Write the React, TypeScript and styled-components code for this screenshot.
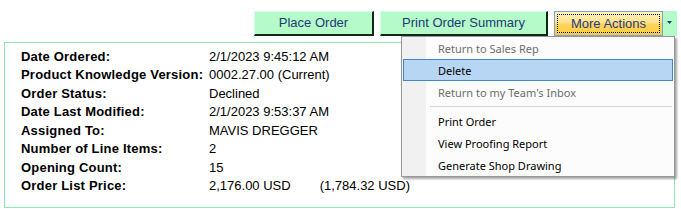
import React from "react";
import styled, { createGlobalStyle, css } from "styled-components";

const Global = createGlobalStyle`
  html, body { margin: 0; padding: 0; background: #ffffff; }
  body { font-family: "Liberation Sans", Arial, sans-serif; }
`;

const Page = styled.div`
  position: relative;
  width: 681px;
  height: 209px;
  overflow: hidden;
  background: #fff;
`;

const Toolbar = styled.div`
  display: flex;
  justify-content: flex-end;
  align-items: flex-start;
  gap: 6px;
  padding: 11px 4px 0 0;
  height: 25px;
`;

const GreenButton = styled.button`
  box-sizing: border-box;
  height: 25px;
  width: ${(p: { $w: number }) => p.$w}px;
  padding: 0 0 1px 0;
  background: #b4fbc9;
  border: none;
  border-top: 1px solid #d8fde3;
  border-left: 1px solid #d8fde3;
  border-right: 2px solid #0f2a14;
  border-bottom: 2px solid #0f2a14;
  font-family: "Liberation Sans", Arial, sans-serif;
  font-size: 13px;
  color: #1f3a73;
  cursor: pointer;
`;

const SplitGroup = styled.div`
  display: flex;
  height: 25px;
`;

const MoreButton = styled.button`
  box-sizing: border-box;
  width: 109px;
  height: 25px;
  padding: 0;
  border: 1px solid #7da2ce;
  background: linear-gradient(#fff3c2 0%, #ffe38a 45%, #ffd45c 55%, #ffcb45 100%);
  font-family: "Liberation Sans", Arial, sans-serif;
  font-size: 13px;
  color: #1f3a80;
  position: relative;
  cursor: pointer;
  &::after {
    content: "";
    position: absolute;
    inset: 2px;
    border: 1px dotted #000;
  }
`;

const ArrowPart = styled.div`
  width: 14px;
  height: 25px;
  background: #b4fbc9;
  display: flex;
  align-items: center;
  justify-content: center;
  padding-bottom: 3px;
  box-sizing: border-box;
`;

const Panel = styled.div`
  box-sizing: border-box;
  margin: 6px 6px 0 4px;
  height: 166px;
  border: 1px solid #8ee7b1;
  padding: 4px 0 0 16px;
`;

const Grid = styled.div`
  display: grid;
  grid-template-columns: 188px auto;
  grid-auto-rows: 18.5px;
  align-items: center;
  font-size: 13px;
  color: #000;
`;

const Label = styled.div`
  font-weight: bold;
  white-space: nowrap;
  letter-spacing: 0.2px;
`;

const Value = styled.div`
  white-space: nowrap;
  display: flex;
`;

const Secondary = styled.span`
  margin-left: 29px;
`;

const Menu = styled.div`
  position: absolute;
  left: 401px;
  top: 36px;
  width: 274px;
  height: 141px;
  box-sizing: border-box;
  border: 1px solid #979797;
  background: linear-gradient(to right, #f1f1f1 0, #f1f1f1 24px, #fcfcfc 24px);
  box-shadow: 2px 2px 2px rgba(0, 0, 0, 0.35);
  padding: 0 1px;
  font-family: "Noto Sans", "Open Sans", sans-serif;
  font-size: 11px;
`;

const Item = styled.div<{ $disabled?: boolean; $active?: boolean }>`
  box-sizing: border-box;
  height: 22px;
  display: flex;
  align-items: center;
  padding-left: 34px;
  border: 1px solid transparent;
  color: ${(p) => (p.$disabled ? "#6d6d6d" : "#000")};
  ${(p) =>
    p.$active &&
    css`
      background: #b7d6f3;
      border-color: #3f88cf;
    `}
`;

const Separator = styled.div`
  height: 1px;
  margin: 3px 1px 3px 27px;
  background: #d7d7d7;
`;

const rows: [string, React.ReactNode][] = [
  ["Date Ordered:", "2/1/2023 9:45:12 AM"],
  ["Product Knowledge Version:", "0002.27.00 (Current)"],
  ["Order Status:", "Declined"],
  ["Date Last Modified:", "2/1/2023 9:53:37 AM"],
  ["Assigned To:", "MAVIS DREGGER"],
  ["Number of Line Items:", "2"],
  ["Opening Count:", "15"],
  [
    "Order List Price:",
    <>
      2,176.00 USD<Secondary>(1,784.32 USD)</Secondary>
    </>,
  ],
];

export default function App() {
  return (
    <Page>
      <Global />
      <Toolbar>
        <GreenButton $w={120}>Place Order</GreenButton>
        <GreenButton $w={168}>Print Order Summary</GreenButton>
        <SplitGroup>
          <MoreButton>More Actions</MoreButton>
          <ArrowPart>
            <svg width="6" height="3" viewBox="0 0 6 3">
              <path d="M0 0H5L2.5 3Z" fill="#1f3a80" />
            </svg>
          </ArrowPart>
        </SplitGroup>
      </Toolbar>
      <Panel>
        <Grid>
          {rows.map(([l, v]) => (
            <React.Fragment key={l}>
              <Label>{l}</Label>
              <Value>{v}</Value>
            </React.Fragment>
          ))}
        </Grid>
      </Panel>
      <Menu>
        <Item $disabled>Return to Sales Rep</Item>
        <Item $active>Delete</Item>
        <Item $disabled>Return to my Team's Inbox</Item>
        <Separator />
        <Item>Print Order</Item>
        <Item>View Proofing Report</Item>
        <Item>Generate Shop Drawing</Item>
      </Menu>
    </Page>
  );
}
